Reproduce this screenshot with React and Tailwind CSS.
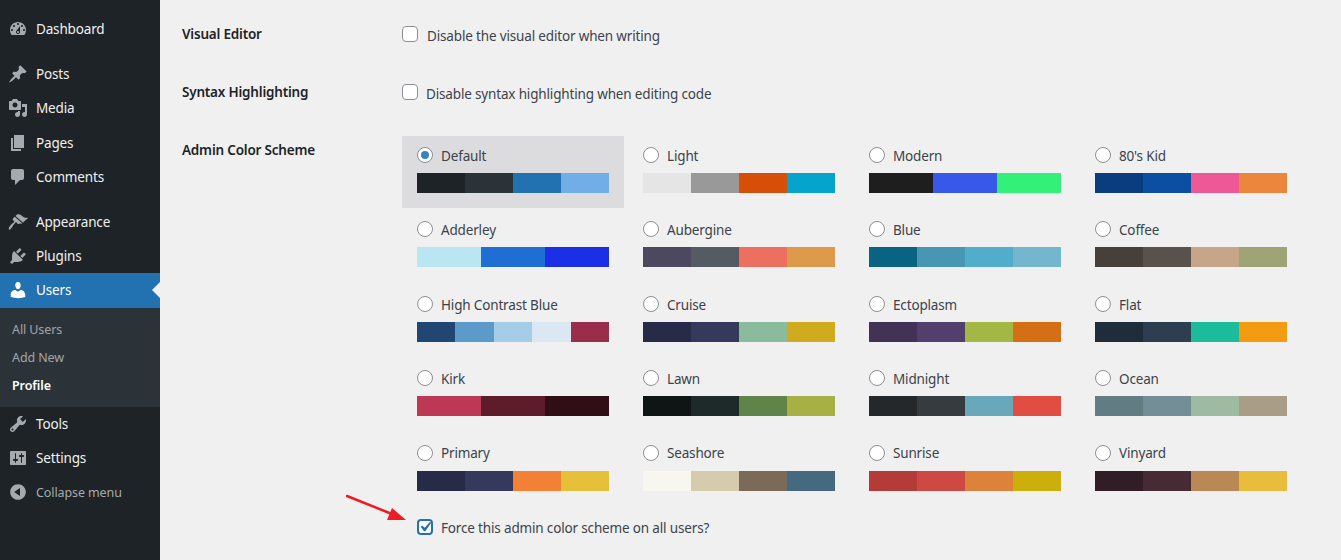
import React from "react";

const font = "font-['Noto_Sans',sans-serif]";

const icons = {
  dashboard:
    "M3.76 16h12.48c1.1-1.37 1.76-3.11 1.76-5 0-4.42-3.58-8-8-8s-8 3.58-8 8c0 1.89.66 3.63 1.76 5zM10 4c.55 0 1 .45 1 1s-.45 1-1 1-1-.45-1-1 .45-1 1-1zM6 6c.55 0 1 .45 1 1s-.45 1-1 1-1-.45-1-1 .45-1 1-1zm8 0c.55 0 1 .45 1 1s-.45 1-1 1-1-.45-1-1 .45-1 1-1zm-5.37 5.55L12 7v6c0 1.1-.9 2-2 2s-2-.9-2-2c0-.57.24-1.08.63-1.45zM4 10c.55 0 1 .45 1 1s-.45 1-1 1-1-.45-1-1 .45-1 1-1zm12 0c.55 0 1 .45 1 1s-.45 1-1 1-1-.45-1-1 .45-1 1-1zm-5 3c0-.55-.45-1-1-1s-1 .45-1 1 .45 1 1 1 1-.45 1-1z",
  posts:
    "M10.44 3.02l1.82-1.82 6.36 6.35-1.83 1.82c-1.05-.68-2.48-.57-3.41.36l-.75.75c-.92.93-1.04 2.35-.35 3.41l-1.83 1.82-2.41-2.41-2.8 2.79c-.42.42-3.38 2.71-3.8 2.29s1.86-3.39 2.28-3.81l2.79-2.79L4.1 9.36l1.83-1.82c1.05.69 2.48.57 3.41-.36l.75-.75c.93-.92 1.05-2.35.35-3.41z",
  media:
    "M13 11V4c0-.55-.45-1-1-1h-1.67L9 1H5L3.67 3H2c-.55 0-1 .45-1 1v7c0 .55.45 1 1 1h10c.55 0 1-.45 1-1zM7 4.5c1.38 0 2.5 1.12 2.5 2.5S8.38 9.5 7 9.5 4.5 8.38 4.5 7 5.62 4.5 7 4.5zM14 6h5v10.5c0 1.38-1.12 2.5-2.5 2.5S14 17.88 14 16.5s1.12-2.5 2.5-2.5c.17 0 .34.02.5.05V9h-3V6zm-4 8.05V13h2v3.5c0 1.38-1.12 2.5-2.5 2.5S7 17.88 7 16.5 8.12 14 9.5 14c.17 0 .34.02.5.05z",
  pages: "M6 15V2h10v13H6zm-1 1h8v2H3V5h2v11z",
  comments: "M5 2h9c1.1 0 2 .9 2 2v7c0 1.1-.9 2-2 2h-2l-5 5v-5H5c-1.1 0-2-.9-2-2V4c0-1.1.9-2 2-2z",
  appearance:
    "M7.5 4L9 2.5c.5-.56 2.3-.47 3.5.3 1.2.8 1.4 1.3 2.9 2.1 1.2.64 2.5 1.1 4.6.9-.3.6-.8 1.2-1.5 1.7-.4.3-.9.3-1.2.2.2.5 0 1-.4 1.3-.4.4-.8.5-1.3.4.1.5-.1 1-.5 1.4zM14.4 11.5L6.8 4.7 4.93 6.47c-.39.39-.39 1.02 0 1.41l1.06 1.06c.39.39.39 1.03 0 1.42-.6.6-1.43 1.11-2.21 1.69-.35.26-.7.53-1.01.84C1.43 14.23.2 16.9.9 17.6c.7.7 2.5-.9 3.84-3.72.31-.31.58-.66.84-1.01.58-.78 1.09-1.61 1.69-2.21.39-.39 1.02-.39 1.41 0l1.06 1.06c.39.39 1.02.39 1.41 0z",
  plugins:
    "M13.11 4.36L9.87 7.6 8 5.73l3.24-3.24c.35-.34 1.05-.2 1.56.32.52.51.66 1.21.31 1.55zm-8 1.77l.91-1.12 9.01 9.01-1.19.84c-.71.71-2.63 1.16-3.82 1.16H6.14L4.9 17.26c-.59.59-1.54.59-2.12 0-.59-.58-.59-1.53 0-2.12l1.24-1.24v-3.88c0-1.13.4-3.19 1.09-3.89zm7.26 3.97l3.24-3.24c.34-.35 1.04-.21 1.55.31.52.51.66 1.21.31 1.55l-3.24 3.25z",
  users:
    "M10 9.25c-2.27 0-2.73-3.44-2.73-3.44C7 4.02 7.82 2 9.97 2c2.16 0 2.98 2.02 2.71 3.81 0 0-.41 3.44-2.68 3.44zm0 2.57L12.72 10c2.39 0 4.52 2.33 4.52 4.53v2.49s-3.65 1.13-7.24 1.13c-3.65 0-7.24-1.13-7.24-1.13v-2.49c0-2.25 1.94-4.48 4.47-4.48z",
  tools:
    "M16.68 9.77c-1.34 1.34-3.3 1.67-4.95.99l-5.41 6.52c-.99.99-2.59.99-3.58 0s-.99-2.59 0-3.57l6.52-5.42c-.68-1.65-.35-3.61.99-4.95 1.28-1.28 3.12-1.62 4.72-1.06l-2.89 2.89 2.82 2.82 2.86-2.87c.53 1.58.18 3.39-1.08 4.65zM3.81 16.21c.4.39 1.04.39 1.43 0 .4-.4.4-1.04 0-1.43-.39-.4-1.03-.4-1.43 0-.39.39-.39 1.03 0 1.43z",
  settings:
    "M18 16V4c0-.55-.45-1-1-1H3c-.55 0-1 .45-1 1v12c0 .55.45 1 1 1h14c.55 0 1-.45 1-1zM8 11h1c.55 0 1 .45 1 1s-.45 1-1 1H8v1.5c0 .28-.22.5-.5.5s-.5-.22-.5-.5V13H6c-.55 0-1-.45-1-1s.45-1 1-1h1V5.5c0-.28.22-.5.5-.5s.5.22.5.5V11zm5-2h-1c-.55 0-1-.45-1-1s.45-1 1-1h1V5.5c0-.28.22-.5.5-.5s.5.22.5.5V7h1c.55 0 1 .45 1 1s-.45 1-1 1h-1v5.5c0 .28-.22.5-.5.5s-.5-.22-.5-.5V9z",
  collapse: "M10 2.16c4.33 0 7.84 3.51 7.84 7.84s-3.51 7.84-7.84 7.84S2.16 14.33 2.16 10 5.71 2.16 10 2.16zm2 11.72V6.12L6.18 9.97z",
};

const schemes = [
  { name: "Default", colors: ["#1d2327", "#2c3338", "#2271b1", "#72aee6"], selected: true },
  { name: "Light", colors: ["#e5e5e5", "#999999", "#d64e07", "#04a4cc"] },
  { name: "Modern", colors: ["#1e1e1e", "#3858e9", "#33f078"] },
  { name: "80's Kid", colors: ["#0a3d80", "#0b4fa0", "#ef5896", "#ec863c"] },
  { name: "Adderley", colors: ["#b9e6f0", "#1f6ed4", "#1a2fe6"] },
  { name: "Aubergine", colors: ["#4c4860", "#565a62", "#ec6f60", "#dd9a4a"] },
  { name: "Blue", colors: ["#096484", "#4796b3", "#52accc", "#74b6ce"] },
  { name: "Coffee", colors: ["#46403c", "#59524c", "#c7a589", "#9ea476"] },
  { name: "High Contrast Blue", colors: ["#214671", "#5c9ac9", "#a5cde8", "#dbe8f3", "#9b2d4c"] },
  { name: "Cruise", colors: ["#282b48", "#35395c", "#8abb9c", "#d0ab1e"] },
  { name: "Ectoplasm", colors: ["#413256", "#523f6d", "#a3b745", "#d46f15"] },
  { name: "Flat", colors: ["#1f2c39", "#2c3e50", "#1abc9c", "#f39c12"] },
  { name: "Kirk", colors: ["#bd3854", "#5e1c2b", "#2f0f15"] },
  { name: "Lawn", colors: ["#0f1514", "#1e2a2a", "#5f8349", "#a7b045"] },
  { name: "Midnight", colors: ["#25282b", "#363b3f", "#69a8bb", "#e14d43"] },
  { name: "Ocean", colors: ["#627c83", "#738e96", "#9ebaa0", "#aa9d88"] },
  { name: "Primary", colors: ["#282b48", "#35395c", "#f38135", "#e7c03a"] },
  { name: "Seashore", colors: ["#f8f6f1", "#d6ccad", "#7c6a58", "#456a7f"] },
  { name: "Sunrise", colors: ["#b43c38", "#cf4944", "#dd823b", "#ccaf0b"] },
  { name: "Vinyard", colors: ["#301d25", "#462b35", "#b98855", "#e9bd3c"] },
];

const Icon = ({ d, className }) => (
  <svg viewBox="0 0 20 20" fill="currentColor" fillRule="evenodd" className={className}>
    <path d={d} />
  </svg>
);

const MenuItem = ({ icon, label, active, muted }) => (
  <div className={`flex h-[34.33px] items-center pl-[8px] ${active ? "relative bg-[#2271b1] text-white" : muted ? "text-[#a7aaad]" : "text-[#f0f0f1]"}`}>
    <Icon d={icons[icon]} className={`h-5 w-5 shrink-0 ${active ? "text-white" : "text-[#a7aaad]"}`} />
    <span className={`ml-[8px] ${muted ? "translate-y-[1px] text-[12.5px] tracking-[-0.1px]" : "text-[13.5px] tracking-[-0.16px]"}`}>{label}</span>
    {active && (
      <span className="absolute right-0 top-1/2 h-0 w-0 -translate-y-1/2 border-y-[8px] border-r-[8px] border-y-transparent border-r-[#f0f0f1]" />
    )}
  </div>
);

const Sidebar = () => (
  <div className="w-[160px] shrink-0 bg-[#1d2327] pt-[12px]">
    <MenuItem icon="dashboard" label="Dashboard" />
    <div className="h-[10.5px]" />
    <MenuItem icon="posts" label="Posts" />
    <MenuItem icon="media" label="Media" />
    <MenuItem icon="pages" label="Pages" />
    <MenuItem icon="comments" label="Comments" />
    <div className="h-[10.5px]" />
    <MenuItem icon="appearance" label="Appearance" />
    <MenuItem icon="plugins" label="Plugins" />
    <MenuItem icon="users" label="Users" active />
    <div className="h-[99px] bg-[#2c3338] pl-[12px] pt-[9px] text-[12.5px] tracking-[-0.1px] text-[#c3c4c7]/80">
      <div className="flex h-[28px] items-center">All Users</div>
      <div className="flex h-[28px] items-center">Add New</div>
      <div className="flex h-[28px] items-center font-semibold text-white">Profile</div>
    </div>
    <MenuItem icon="tools" label="Tools" />
    <MenuItem icon="settings" label="Settings" />
    <MenuItem icon="collapse" label="Collapse menu" muted />
  </div>
);

const Radio = ({ checked }) => (
  <span className="flex h-4 w-4 shrink-0 items-center justify-center rounded-full border border-[#8c8f94] bg-white">
    {checked && <span className="h-2 w-2 rounded-full bg-[#3582c4]" />}
  </span>
);

const SchemeOption = ({ scheme }) => (
  <div className={`px-[15px] pt-[11px] ${scheme.selected ? "-mb-[0.6px] h-[72px] bg-[#dcdcde]" : "h-[71.4px]"}`}>
    <div className="flex h-4 items-center">
      <Radio checked={scheme.selected} />
      <span className="ml-[8px] translate-y-[1px] text-[13.5px] tracking-[-0.16px] text-[#3c434a]">{scheme.name}</span>
    </div>
    <div className="mt-[10px] flex h-5">
      {scheme.colors.map((c) => (
        <div key={c} className="flex-1" style={{ backgroundColor: c }} />
      ))}
    </div>
  </div>
);

const Row = ({ label, text, gap }) => (
  <div className="flex h-[58px] items-start">
    <div className="w-[220px] text-[13.5px] font-semibold tracking-[-0.2px] text-[#1d2327]">{label}</div>
    <div className="flex items-center pt-[1px]">
      <span className="h-4 w-4 -translate-y-[1px] rounded-[4px] border border-[#8c8f94] bg-white" />
      <span className={`${gap} translate-y-[1px] text-[13.5px] tracking-[-0.16px] text-[#3c434a]`}>{text}</span>
    </div>
  </div>
);

export default function App() {
  return (
    <div className={`flex h-[560px] overflow-hidden bg-[#f0f0f1] ${font}`}>
      <Sidebar />
      <div className="relative flex-1 pl-[22px] pt-[24px]">
        <Row label="Visual Editor" text="Disable the visual editor when writing" gap="ml-[9px]" />
        <Row label="Syntax Highlighting" text="Disable syntax highlighting when editing code" gap="ml-[8px]" />
        <div className="flex">
          <div className="w-[220px] text-[13.5px] font-semibold tracking-[-0.2px] text-[#1d2327]">Admin Color Scheme</div>
          <div>
            <div className="-mt-[4px] grid w-[900px] grid-cols-[repeat(4,222px)] gap-x-[4px] gap-y-[3px]">
              {schemes.map((s) => (
                <SchemeOption key={s.name} scheme={s} />
              ))}
            </div>
            <div className="ml-[15px] mt-[11px] flex items-center">
              <span className="flex h-4 w-4 shrink-0 items-center justify-center rounded-[4px] border-2 border-[#2271b1] bg-white">
                <svg viewBox="0 0 20 20" className="h-5 w-5 shrink-0 text-[#2271b1]" fill="currentColor">
                  <path d="M14.83 4.89l1.34.94-5.81 8.38H9.02L5.78 9.67l1.34-1.25 2.57 2.4z" />
                </svg>
              </span>
              <span className="ml-[8px] mt-[2px] text-[13.5px] tracking-[-0.16px] text-[#3c434a]">Force this admin color scheme on all users?</span>
            </div>
          </div>
        </div>
        <svg className="absolute left-[186px] top-[494px] h-[30px] w-[64px]" viewBox="0 0 64 30">
          <path d="M1 2 L46 20" stroke="#ed1c24" strokeWidth="2.5" strokeLinecap="round" />
          <path d="M60 26 L41 26 L46 14 Z" fill="#ed1c24" />
        </svg>
      </div>
    </div>
  );
}
